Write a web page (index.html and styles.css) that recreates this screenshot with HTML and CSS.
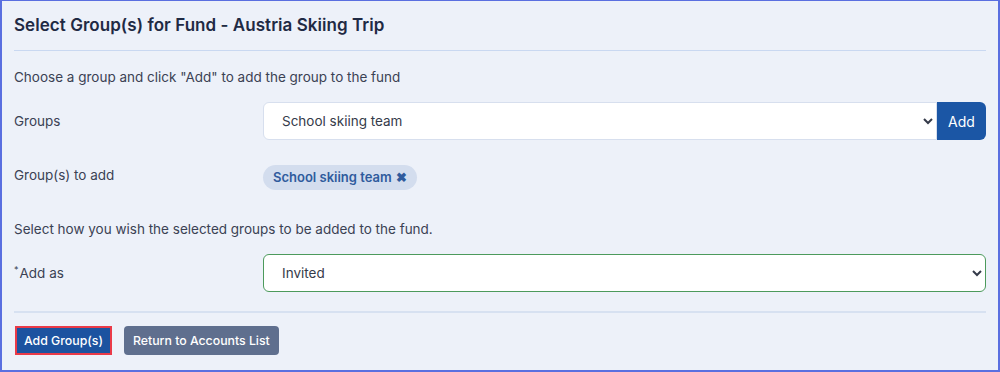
FILE: index.html
```html
<!DOCTYPE html>
<html>
<head>
<meta charset="utf-8" />
<title>Select Group(s) for Fund</title>
<link rel="stylesheet" href="styles.css">
</head>
<body>
  <div id="panel">
    <div class="panel-head">
      <h2 class="title">Select Group(s) for Fund - Austria Skiing Trip</h2>
    </div>
    <div class="panel-body">
      <p class="hint">Choose a group and click "Add" to add the group to the fund</p>
      <div class="row row-groups">
        <label class="label">Groups</label>
        <div class="control combo">
          <select class="select">
            <option>School skiing team</option>
          </select>
          <button class="btn-add">Add</button>
        </div>
      </div>
      <div class="row row-chips">
        <label class="label">Group(s) to add</label>
        <div class="control">
          <span class="chip">School skiing team <span class="chip-x">&#10006;</span></span>
        </div>
      </div>
      <p class="hint hint2">Select how you wish the selected groups to be added to the fund.</p>
      <div class="row row-addas">
        <label class="label"><sup class="req">*</sup>Add as</label>
        <div class="control">
          <select class="select select-ok">
            <option>Invited</option>
          </select>
        </div>
      </div>
      <div class="actions">
        <button class="btn btn-primary">Add Group(s)</button>
        <button class="btn btn-secondary">Return to Accounts List</button>
      </div>
    </div>
  </div>
</body>
</html>
```

FILE: styles.css
```css
body,div,p,h2,label,button,select
{
	margin: 0;
	padding: 0;
}
body
{
	font-family: Inter, "Noto Sans", sans-serif;
	color: #3b4254;
	background: #edf1f9;
}
#panel
{
	box-sizing: border-box;
	width: 1000px;
	height: 372px;
	border-style: solid;
	border-color: #5a6fe0;
	border-width: 1px 2px 2px 2px;
	background: #edf1f9;
}
.panel-head
{
	height: 49px;
	margin: 0 12px;
	border-bottom: 1px solid #c9d8f1;
	display: flex;
	align-items: center;
}
.title
{
	font-size: 17px;
	font-weight: 600;
	color: #1f2a44;
	letter-spacing: 0.05px;
	margin-top: -2px;
}
.panel-body
{
	padding: 0 12px;
}
.hint
{
	font-size: 13.5px;
	line-height: 18px;
	padding-top: 17px;
}
.row
{
	display: grid;
	grid-template-columns: 249px 1fr;
	align-items: center;
}
.label
{
	font-size: 13.5px;
}
.row-groups
{
	margin-top: 16px;
}
.combo
{
	display: flex;
}
.select
{
	box-sizing: border-box;
	width: 100%;
	height: 38px;
	padding: 0 10px 0 14px;
	font-family: Inter, "Noto Sans", sans-serif;
	font-size: 13.5px;
	color: #353b4a;
	background: #fff;
	border: 1px solid #d7dfee;
	border-radius: 6px;
	outline: none;
}
.combo .select
{
	border-radius: 6px 0 0 6px;
	flex: 1;
}
.btn-add
{
	width: 49px;
	height: 38px;
	border: none;
	border-radius: 0 6px 6px 0;
	background: #1b56a5;
	color: #fff;
	font-family: Inter, "Noto Sans", sans-serif;
	font-size: 14px;
}
.row-chips
{
	margin-top: 25px;
}
.row-chips .label
{
	margin-top: -6px;
}
.chip
{
	display: inline-block;
	height: 25px;
	line-height: 25px;
	padding: 0 10px;
	border-radius: 13px;
	background: #d3ddee;
	color: #2f5b9d;
	font-size: 13px;
	font-weight: 600;
}
.chip-x
{
	font-size: 12.5px;
	margin-left: 1px;
}
.hint2
{
	padding-top: 30px;
}
.row-addas
{
	margin-top: 16px;
}
.req
{
	font-size: 9px;
	vertical-align: top;
	position: relative;
	top: -1px;
	margin-right: 1px;
}
.select-ok
{
	border-color: #4c9a5c;
}
.actions
{
	margin-top: 19px;
	border-top: 2px solid #d7e1f1;
	padding-top: 13px;
	display: flex;
	gap: 12px;
	align-items: center;
}
.btn
{
	height: 29px;
	padding: 0 9px;
	border: none;
	border-radius: 4px;
	color: #fff;
	font-family: Inter, "Noto Sans", sans-serif;
	font-size: 12.3px;
	font-weight: 500;
}
.btn-primary
{
	background: #1c53a0;
	border: 2px solid #ea3a48;
	border-radius: 0;
	padding: 0 7px;
	margin-left: 1px;
}
.btn-secondary
{
	background: #5f6f8e;
}
```
